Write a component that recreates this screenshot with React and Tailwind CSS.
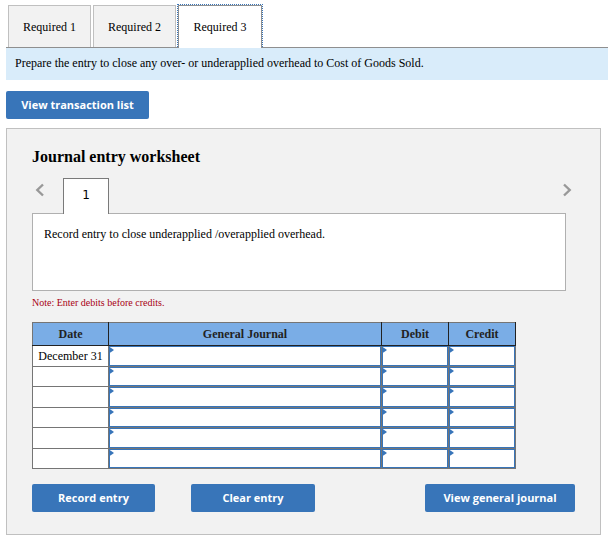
import React, { useState } from 'react';

const tabs = ['Required 1', 'Required 2', 'Required 3'];

const emptyRows = [
  { date: 'December 31', account: '', debit: '', credit: '' },
  { date: '', account: '', debit: '', credit: '' },
  { date: '', account: '', debit: '', credit: '' },
  { date: '', account: '', debit: '', credit: '' },
  { date: '', account: '', debit: '', credit: '' },
  { date: '', account: '', debit: '', credit: '' },
];

const columns = [
  { key: 'account', label: 'General Journal' },
  { key: 'debit', label: 'Debit' },
  { key: 'credit', label: 'Credit' },
];

function BlueButton({ className, children, onClick }) {
  return (
    <button
      type="button"
      onClick={onClick}
      className={`h-7 rounded-xs bg-[#3875b9] text-center font-['Open_Sans',Verdana,sans-serif] text-[11px] font-bold text-white hover:bg-[#2f66a3] ${className}`}
    >
      {children}
    </button>
  );
}

function Chevron({ direction }) {
  return (
    <svg width="10" height="14" viewBox="0 0 10 14" fill="none" stroke="#999" strokeWidth="2.4">
      <path d={direction === 'left' ? 'M8 1.5L2.3 7L8 12.5' : 'M2 1.5L7.7 7L2 12.5'} />
    </svg>
  );
}

// Editable cell with the small marker in its corner
function EntryCell({ label, value, onChange }) {
  return (
    <td className="relative h-px border border-[#757575] p-0">
      <input
        type="text"
        aria-label={label}
        value={value}
        onChange={(e) => onChange(e.target.value)}
        className="block h-full min-h-[19px] w-full border border-[#3875b9] bg-white px-2 text-xs outline-none"
      />
      <svg className="pointer-events-none absolute top-px left-0" width="5" height="6" viewBox="0 0 5 6" fill="#3875b9">
        <path d="M0 0.5H1.5L5 3L1.5 5.5H0Z" />
      </svg>
    </td>
  );
}

export default function App() {
  const [activeTab, setActiveTab] = useState(2);
  const [rows, setRows] = useState(emptyRows);

  const updateRow = (rowIndex, key, value) => {
    setRows(prev => prev.map((row, i) => (i === rowIndex ? { ...row, [key]: value } : row)));
  };

  return (
    <div className="min-h-screen bg-white pt-[5px] pb-[7px] pl-1.5 font-['Liberation_Serif','Times_New_Roman',serif] text-xs text-black">
      {/* Tabs */}
      <div role="tablist" className="flex items-end gap-0.5 border-b border-[#8f8f8f] pl-0.5">
        {tabs.map((tab, index) => (
          <button
            key={tab}
            type="button"
            role="tab"
            aria-selected={activeTab === index}
            onClick={() => setActiveTab(index)}
            className={
              activeTab === index
                ? '-mb-px h-[43px] w-[84px] border border-b-0 border-[#8f8f8f] bg-white outline-1 outline-dotted outline-[#3875b9] [clip-path:inset(-1px_-1px_0_-1px)]'
                : 'h-[42px] w-[83px] border border-b-0 border-[#c0c0c0] bg-[#f2f2f2]'
            }
          >
            {tab}
          </button>
        ))}
      </div>

      {/* Instruction */}
      <p className="bg-[#d9ecfa] px-[9px] pt-[7px] pb-[9px] leading-4">
        Prepare the entry to close any over- or underapplied overhead to Cost of Goods Sold.
      </p>

      <BlueButton className="mt-[11px] w-[143px]">View transaction list</BlueButton>

      {/* Worksheet */}
      <section className="mt-[9px] mr-[7px] border border-[#c0c0c0] bg-[#f2f2f2] px-[25px] pt-[18px] pb-[22px]">
        <h1 className="text-base leading-5 font-bold">Journal entry worksheet</h1>

        <div className="mt-[11px] flex items-start justify-between px-[3px]">
          <div className="flex items-start gap-[18px]">
            <button type="button" aria-label="Previous entry" className="mt-[5px]">
              <Chevron direction="left" />
            </button>
            <button
              type="button"
              className="relative -mb-px h-9 w-[46px] border border-b-0 border-[#7a7a7a] bg-white pb-1 font-['DejaVu_Sans',Verdana,sans-serif]"
            >
              1
            </button>
          </div>
          <button type="button" aria-label="Next entry" className="mt-[5px]">
            <Chevron direction="right" />
          </button>
        </div>

        <div className="mr-[9px] min-h-[78px] border border-[#b0b0b0] bg-white px-[11px] py-3">
          <p className="leading-4">Record entry to close underapplied /overapplied overhead.</p>
        </div>

        <p className="mt-1 text-[10px] leading-4 text-[#a80014]">Note: Enter debits before credits.</p>

        {/* Journal */}
        <table className="mt-[11px] h-[147px] w-full max-w-[484px] table-fixed border-collapse bg-white">
          <colgroup>
            <col className="w-[76px]" />
            <col />
            <col className="w-[67px]" />
            <col className="w-[67px]" />
          </colgroup>
          <thead>
            <tr className="h-[23px] bg-[#7aade6] text-[#222]">
              <th scope="col" className="border border-[#222] border-t-[#757575] border-l-[#757575] p-0">Date</th>
              {columns.map(column => (
                <th key={column.key} scope="col" className="border border-[#222] border-t-[#757575] p-0">
                  {column.label}
                </th>
              ))}
            </tr>
          </thead>
          <tbody>
            {rows.map((row, index) => (
              <tr key={index}>
                <td className="border border-[#757575] p-0 text-center">{row.date}</td>
                {columns.map(column => (
                  <EntryCell
                    key={column.key}
                    label={`${column.label}, line ${index + 1}`}
                    value={row[column.key]}
                    onChange={(value) => updateRow(index, column.key, value)}
                  />
                ))}
              </tr>
            ))}
          </tbody>
        </table>

        <div className="mt-[15px] flex justify-between">
          <div className="flex gap-9">
            <BlueButton className="w-[123px]">Record entry</BlueButton>
            <BlueButton className="w-[124px]" onClick={() => setRows(emptyRows)}>Clear entry</BlueButton>
          </div>
          <BlueButton className="w-[150px]">View general journal</BlueButton>
        </div>
      </section>
    </div>
  );
}
